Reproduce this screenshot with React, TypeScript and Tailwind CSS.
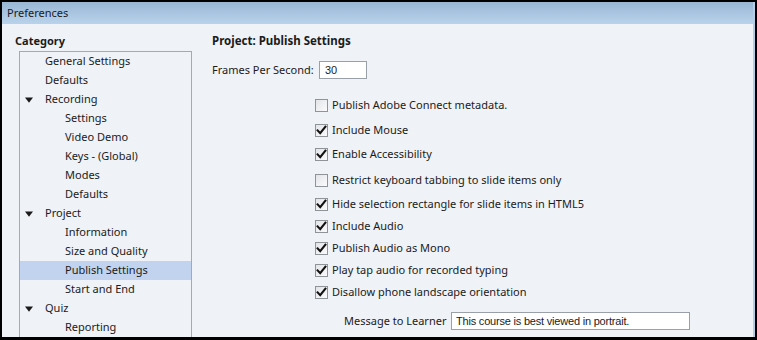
import React from "react";

const font = { fontFamily: '"Noto Sans", "DejaVu Sans", sans-serif' };
const arial = { fontFamily: '"Liberation Sans", Arial, sans-serif' };

function Tri() {
  return (
    <svg width="8" height="6" viewBox="0 0 8 6" className="shrink-0">
      <polygon points="0,0.5 8,0.5 4,5.8" fill="#1a1a1a" />
    </svg>
  );
}

function Check({ checked }: { checked: boolean }) {
  return (
    <div className="w-[13px] h-[13px] border border-[#8f9499] bg-gradient-to-br from-[#e2e4e8] to-[#fbfbfc] flex items-center justify-center shrink-0">
      {checked && (
        <svg width="11" height="11" viewBox="0 0 11 11">
          <path d="M1.6 5.4 L4.2 8.2 L9.4 1.6" stroke="#111" strokeWidth="2.1" fill="none" strokeLinecap="square" />
        </svg>
      )}
    </div>
  );
}

type Item = { label: string; level: number; tri?: boolean; sel?: boolean };
const items: Item[] = [
  { label: "General Settings", level: 1 },
  { label: "Defaults", level: 1 },
  { label: "Recording", level: 1, tri: true },
  { label: "Settings", level: 2 },
  { label: "Video Demo", level: 2 },
  { label: "Keys - (Global)", level: 2 },
  { label: "Modes", level: 2 },
  { label: "Defaults", level: 2 },
  { label: "Project", level: 1, tri: true },
  { label: "Information", level: 2 },
  { label: "Size and Quality", level: 2 },
  { label: "Publish Settings", level: 2, sel: true },
  { label: "Start and End", level: 2 },
  { label: "Quiz", level: 1, tri: true },
  { label: "Reporting", level: 2 },
];

const checks: { label: string; checked: boolean; mt: string }[] = [
  { label: "Publish Adobe Connect metadata.", checked: false, mt: "mt-0" },
  { label: "Include Mouse", checked: true, mt: "mt-[4px]" },
  { label: "Enable Accessibility", checked: true, mt: "mt-[3px]" },
  { label: "Restrict keyboard tabbing to slide items only", checked: false, mt: "mt-[5px]" },
  { label: "Hide selection rectangle for slide items in HTML5", checked: true, mt: "mt-[3px]" },
  { label: "Include Audio", checked: true, mt: "mt-[1px]" },
  { label: "Publish Audio as Mono", checked: true, mt: "mt-[1px]" },
  { label: "Play tap audio for recorded typing", checked: true, mt: "mt-[1px]" },
  { label: "Disallow phone landscape orientation", checked: true, mt: "mt-[1px]" },
];

export default function App() {
  return (
    <div className="w-[757px] h-[340px] bg-black pt-[2px] pl-[2px] pr-[2px] pb-[3px] overflow-hidden text-[#1b1b1b]" style={font}>
      <div className="w-full h-full flex flex-col bg-[#eff2f7] border-r-2 border-[#b6cde6] overflow-hidden">
        <div className="h-[22px] shrink-0 bg-gradient-to-b from-[#99b6d3] to-[#bad3ec] flex items-center pl-[5px] text-[11px]">
          Preferences
        </div>
        <div className="flex flex-1 min-h-0">
          <div className="w-[190px] shrink-0 flex flex-col pl-[13px] pt-[7px]">
            <div className="text-[11px] font-bold h-[20px] leading-[20px] whitespace-nowrap">Category</div>
            <div className="ml-[4px] flex-1 border-t border-l border-r border-[#a3a9b5] flex flex-col">
              {items.map((it, i) => (
                <div
                  key={i}
                  className={
                    "h-[19px] flex items-center text-[11px] shrink-0 whitespace-nowrap " +
                    (it.sel ? "bg-[#c1d3ef]" : "")
                  }
                >
                  <div className="w-[25px] shrink-0 flex justify-start pl-[5px]">{it.tri && <Tri />}</div>
                  <div className={it.level === 2 ? "pl-[20px]" : ""}>{it.label}</div>
                </div>
              ))}
            </div>
          </div>
          <div className="flex-1 flex flex-col pl-[20px] pt-[7px]">
            <div className="text-[11.5px] font-bold h-[20px] leading-[20px] whitespace-nowrap">Project: Publish Settings</div>
            <div className="flex items-center mt-[10px] h-[18px]">
              <span className="text-[11px] w-[107px] whitespace-nowrap">Frames Per Second:</span>
              <div className="w-[48px] h-[18px] bg-white border border-[#9aa0a8] flex items-center pl-[5px] text-[11px]" style={arial}>30</div>
            </div>
            <div className="flex flex-col ml-[103px] mt-[16px]">
              {checks.map((c, i) => (
                <div key={i} className={"h-[21px] flex items-center gap-[4px] text-[11px] whitespace-nowrap " + c.mt}>
                  <Check checked={c.checked} />
                  <span>{c.label}</span>
                </div>
              ))}
            </div>
            <div className="flex items-center mt-[8px] h-[20px] ml-[132px]">
              <span className="text-[11px] w-[107px] whitespace-nowrap">Message to Learner</span>
              <div
                className="w-[239px] h-[18px] bg-white border border-[#9aa0a8] flex items-center pl-[4px] text-[11px] tracking-[-0.2px] whitespace-nowrap"
                style={arial}
              >
                This course is best viewed in portrait.
              </div>
            </div>
          </div>
        </div>
      </div>
    </div>
  );
}
